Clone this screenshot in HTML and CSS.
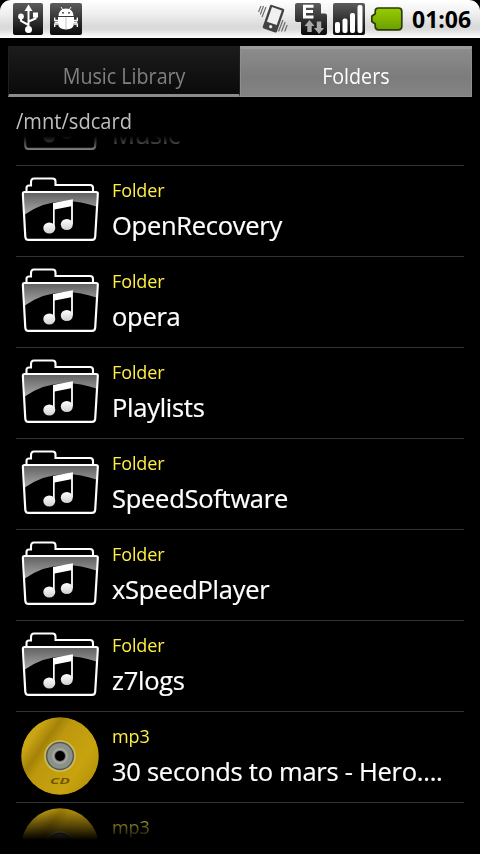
FILE: index.html
```html
<!DOCTYPE html>
<html lang="en">
<head>
    <meta charset="UTF-8">
    <title>Music Player - Folders</title>
    <meta name="viewport" content="width=device-width, initial-scale=1.0">
    <link rel="stylesheet" href="styles.css">
</head>
<body>
    <!-- Shared icons -->
    <svg class="icon-defs" width="0" height="0">
        <defs>
            <linearGradient id="gloss" x1="0" y1="0" x2="0" y2="1">
                <stop offset="0" stop-color="#626262"/>
                <stop offset="1" stop-color="#aaa"/>
            </linearGradient>
            <linearGradient id="note" x1="0" y1="0" x2="0" y2="1">
                <stop offset="0" stop-color="#fff"/>
                <stop offset="1" stop-color="#d0d0d0"/>
            </linearGradient>
            <linearGradient id="gold" x1="0" y1="0" x2="1" y2="0.7">
                <stop offset="0" stop-color="#d0ac18"/>
                <stop offset="0.22" stop-color="#c9a414"/>
                <stop offset="0.36" stop-color="#a38207"/>
                <stop offset="0.46" stop-color="#bd980e"/>
                <stop offset="0.8" stop-color="#c8a30e"/>
                <stop offset="1" stop-color="#b8930c"/>
            </linearGradient>
            <linearGradient id="badge" x1="0" y1="0" x2="0" y2="1">
                <stop offset="0" stop-color="#5c5c5c"/>
                <stop offset="1" stop-color="#090909"/>
            </linearGradient>
            <linearGradient id="battery" x1="0" y1="0" x2="0" y2="1">
                <stop offset="0" stop-color="#98cc00"/>
                <stop offset="1" stop-color="#6ba000"/>
            </linearGradient>
        </defs>
        <symbol id="icon-folder" viewBox="0 0 80 80">
            <path d="M6.500 22V18q0-2.500 2.500-2.500H11V12q0-3.500 3-3.500H32.500q3 0 3 3V15H70q3 0 3 3V22" fill="none" stroke="#fff" stroke-width="2.100"/>
            <path d="M4 23H77L75 67q-.2 3-3 3H8.500q-3 0-3.200-3Z" fill="#000"/>
            <path d="M4 23H77L76.300 36.500Q36 23 4.800 44.500Z" fill="url(#gloss)"/>
            <path d="M4.500 22H76q2 0 1.800 2L75.200 66.700q-.2 3.200-3.200 3.200H8.500q-3 0-3.200-3.200L2.900 24q-.1-2 1.600-2Z" fill="none" stroke="#fff" stroke-width="2.200"/>
            <path d="M33 33L52.900 29.300V54H51.100V36.200L34.700 39.600V58H33Z" fill="#fff"/>
            <ellipse cx="29.300" cy="58" rx="6" ry="5.600" fill="url(#note)"/>
            <ellipse cx="46.800" cy="54.500" rx="6" ry="5.600" fill="url(#note)"/>
        </symbol>
        <symbol id="icon-cd" viewBox="0 0 80 80">
            <circle cx="40" cy="40" r="38.700" fill="url(#gold)"/>
            <circle cx="40" cy="40" r="15.800" fill="#d0bd60"/>
            <circle cx="40" cy="40" r="14.200" fill="#555a50"/>
            <circle cx="40" cy="40" r="12.700" fill="#8b9089"/>
            <circle cx="40" cy="40" r="8" fill="#a3a7a2"/>
            <circle cx="40" cy="40" r="6" fill="#777"/>
            <circle cx="40" cy="40" r="5" fill="#000"/>
            <text class="cd-text" x="30" y="68" textLength="20" lengthAdjust="spacingAndGlyphs">CD</text>
        </symbol>
    </svg>

    <!-- Status bar -->
    <div class="status-bar">
        <svg class="status-icon usb" width="30" height="32" viewBox="0 0 30 32">
            <rect width="30" height="32" rx="2" fill="url(#badge)"/>
            <path d="M15.500 25V6M15.500 22L8 18V14M15.500 18.500L22.500 15.500V12" fill="none" stroke="#fff" stroke-width="2"/>
            <path d="M15.500 1.500L19.500 8H11.500Z" fill="#fff"/>
            <circle cx="15.500" cy="26.500" r="3.500" fill="#fff"/>
            <circle cx="8" cy="13.500" r="2.900" fill="#fff"/>
            <rect x="20" y="9.500" width="5" height="5" fill="#fff"/>
        </svg>
        <svg class="status-icon debug" width="32" height="32" viewBox="0 0 32 32">
            <rect width="32" height="32" rx="2" fill="url(#badge)"/>
            <path d="M11 4l2 3M21 4l-2 3" stroke="#fff" stroke-width="1"/>
            <path d="M8.500 13Q9 5.500 16 5.500T23.500 13Z" fill="#fff"/>
            <path d="M8 14H24V20Q24 26.500 16 26.500T8 20Z" fill="#fff"/>
            <path d="M16 14V26.500" stroke="#aaa" stroke-width=".7"/>
            <path d="M8 17.500H4.700V14.500M8 19.300H4.700M8 21H4.700V24M24 17.500H27.300V14.500M24 19.300H27.300M24 21H27.300V24" fill="none" stroke="#fff" stroke-width="1.300"/>
            <circle cx="13" cy="9.800" r=".9" fill="#222"/>
            <circle cx="19" cy="9.800" r=".9" fill="#222"/>
        </svg>

        <svg class="status-icon vibrate" width="30" height="30" viewBox="0 0 30 30">
            <g transform="rotate(19 15 14.500)">
                <rect x="8" y="2" width="15" height="25" rx="1.500" fill="#424242"/>
                <rect x="10.300" y="4" width="10.400" height="15.500" fill="#f0f0f0"/>
                <circle cx="15.500" cy="23" r="1.600" fill="#eee"/>
            </g>
            <path d="M3 2L.5 8M5.500 2L2.300 10.500M8 3L4 13M25 16L20.500 27.500M27.200 18L23.500 27.500M29.200 21L26.700 27.500" stroke="#666" stroke-width="1.100"/>
        </svg>
        <svg class="status-icon edge" width="32" height="32" viewBox="0 0 32 32">
            <path d="M2 0H24q2 0 2 2V10.500H30q2 0 2 2V30q0 2-2 2H8q-2 0-2-2V19H2q-2 0-2-2V2Q0 0 2 0Z" fill="url(#badge)"/>
            <path d="M18.500 3.300H9.500V14H18.500M9.500 8.600H18" fill="none" stroke="#fff" stroke-width="3"/>
            <path d="M14.500 17L19.500 23H16.700V29H12.300V23H9.500Z" fill="#aaa"/>
            <path d="M24 31L29 25H26.200V18.500H21.800V25H19Z" fill="#aaa"/>
        </svg>
        <svg class="status-icon signal" width="32" height="32" viewBox="0 0 32 32">
            <rect width="32" height="32" rx="2" fill="url(#badge)"/>
            <rect x="2" y="19" width="5" height="11" rx="2" fill="#fff"/>
            <rect x="9.500" y="15.500" width="5" height="14.500" rx="2" fill="#fff"/>
            <rect x="17" y="10" width="5" height="20" rx="2" fill="#fff"/>
            <rect x="24.500" y="2" width="5" height="28" rx="2" fill="#fff"/>
        </svg>
        <svg class="status-icon battery" width="33" height="24" viewBox="0 0 33 24">
            <path d="M8.500 1H28.500q3.300 0 3.300 3.300V19.500q0 3.300-3.300 3.300H8.500q-3.300 0-3.300-3.300V17L1.800 14.500V9.300L5.200 6.800V4.300Q5.200 1 8.500 1Z" fill="url(#battery)" stroke="#2c3a08" stroke-width="1.700"/>
        </svg>
        <span class="clock">01:06</span>
    </div>

    <!-- Tabs -->
    <div class="tabs">
        <div class="tab"><span class="tab-label">Music Library</span></div>
        <div class="tab active"><span class="tab-label">Folders</span></div>
    </div>

    <div class="path"><span class="path-label">/mnt/sdcard</span></div>

    <!-- File list -->
    <div class="list-view">
        <ul class="list">
            <li class="row">
                <svg class="row-icon"><use href="#icon-folder"/></svg>
                <div class="row-text"><span class="type">Folder</span><span class="name">Music</span></div>
            </li>
            <li class="row">
                <svg class="row-icon"><use href="#icon-folder"/></svg>
                <div class="row-text"><span class="type">Folder</span><span class="name">OpenRecovery</span></div>
            </li>
            <li class="row">
                <svg class="row-icon"><use href="#icon-folder"/></svg>
                <div class="row-text"><span class="type">Folder</span><span class="name">opera</span></div>
            </li>
            <li class="row">
                <svg class="row-icon"><use href="#icon-folder"/></svg>
                <div class="row-text"><span class="type">Folder</span><span class="name">Playlists</span></div>
            </li>
            <li class="row">
                <svg class="row-icon"><use href="#icon-folder"/></svg>
                <div class="row-text"><span class="type">Folder</span><span class="name">SpeedSoftware</span></div>
            </li>
            <li class="row">
                <svg class="row-icon"><use href="#icon-folder"/></svg>
                <div class="row-text"><span class="type">Folder</span><span class="name">xSpeedPlayer</span></div>
            </li>
            <li class="row">
                <svg class="row-icon"><use href="#icon-folder"/></svg>
                <div class="row-text"><span class="type">Folder</span><span class="name">z7logs</span></div>
            </li>
            <li class="row">
                <svg class="row-icon"><use href="#icon-cd"/></svg>
                <div class="row-text"><span class="type">mp3</span><span class="name">30 seconds to mars - Hero....</span></div>
            </li>
            <li class="row">
                <svg class="row-icon"><use href="#icon-cd"/></svg>
                <div class="row-text"><span class="type">mp3</span></div>
            </li>
        </ul>
    </div>
</body>
</html>
```

FILE: styles.css
```css
:root {
    --bg: #000;
    --divider: #333;
    --type-color: #ffee44;
    --text-color: #fff;
}

* {
    box-sizing: border-box;
}

body {
    margin: 0;
    height: 100vh;
    display: flex;
    flex-direction: column;
    overflow: hidden;
    background: var(--bg);
    color: var(--text-color);
    font-family: 'Open Sans', 'Noto Sans', sans-serif;
}

.icon-defs {
    display: block;
    flex: none;
}

.cd-text {
    font: italic bold 8px 'Open Sans', sans-serif;
    fill: #6d5700;
}

/* Status bar */
.status-bar {
    flex: none;
    display: flex;
    align-items: center;
    height: 38px;
    padding: 0 8px 0 13px;
    border-radius: 11px 11px 0 0;
    background: linear-gradient(#fff, #f0f0f0 35%, #d9d9d9 70%, #dcdcdc 78%, #fff);
    color: #000;
}

.status-icon {
    flex: none;
}

.usb {
    margin-right: 7px;
}

.vibrate {
    margin-left: auto;
    margin-right: 7px;
}

.edge {
    margin-right: 6px;
}

.signal {
    margin-right: 5px;
}

.battery {
    margin-right: 9px;
}

.clock {
    width: 60px;
    font-size: 23px;
    font-weight: bold;
    line-height: 38px;
    white-space: nowrap;
}

/* Tabs */
.tabs {
    flex: none;
    display: flex;
    height: 51px;
    margin: 8px 8px 0;
}

.tab {
    flex: 1;
    padding-top: 14px;
    text-align: center;
    font-size: 21.5px;
    line-height: 30px;
    color: #808080;
    background: linear-gradient(#1c1c1c, #0a0a0a);
    border: 1px solid #1e1e1e;
    border-bottom: 3px solid #8c8c8c;
}

.tab.active {
    color: #fff;
    background: linear-gradient(#8c8c8c, #7c7c7c 60%, #848484);
    border: 1px solid #8e8e8e;
    border-top: 3px solid #9c9c9c;
    padding-top: 12px;
}

/* Narrow label face */
.tab-label {
    display: inline-block;
    transform: scaleX(0.915);
}

.path {
    flex: none;
    height: 39px;
    padding: 9px 16px 0;
    font-size: 21.5px;
    line-height: 30px;
    color: #bebebe;
}

.path-label {
    display: inline-block;
    transform: scaleX(0.935);
    transform-origin: left;
}

/* List, faded at both scroll edges */
.list-view {
    flex: none;
    height: 704px;
    overflow: hidden;
    -webkit-mask-image: linear-gradient(transparent, #000 28px, #000 calc(100% - 32px), transparent);
    mask-image: linear-gradient(transparent, #000 28px, #000 calc(100% - 32px), transparent);
}

.list {
    margin: -61px 16px 0;
    padding: 0;
    list-style: none;
}

.row {
    display: flex;
    height: 91px;
    padding: 4px 4px 5px;
    border-bottom: 1px solid var(--divider);
}

.row-icon {
    flex: none;
    width: 80px;
    height: 80px;
    margin-right: 12px;
}

.row-text {
    display: flex;
    flex-direction: column;
    padding-top: 8px;
    white-space: nowrap;
}

.type {
    font-size: 18px;
    line-height: 24px;
    letter-spacing: -0.1px;
    color: var(--type-color);
}

.name {
    padding-top: 5px;
    font-size: 25.5px;
    line-height: 36px;
    letter-spacing: -0.27px;
    -webkit-text-stroke: 0.2px;
}
```
